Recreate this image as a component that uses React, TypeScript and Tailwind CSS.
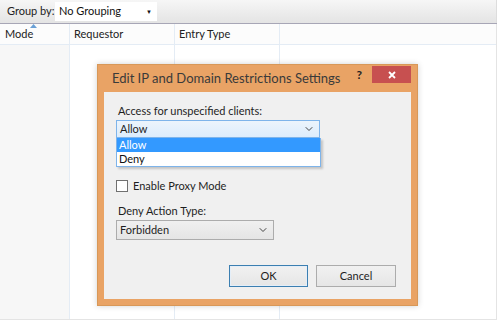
import { ChevronDown } from 'lucide-react'

const font = { fontFamily: 'Lato, "Noto Sans", sans-serif' }

function Select({ value, focused, width, height }: { value: string; focused?: boolean; width: string; height: string }) {
  return (
    <div
      className={`${width} ${height} flex items-center justify-between pl-[3px] pr-[4px] border text-[11px] text-[#1e1e1e] ${
        focused
          ? 'border-[#7eb4ea] bg-gradient-to-b from-[#ecf4fc] to-[#dcecfc]'
          : 'border-[#acacac] bg-gradient-to-b from-[#f0f0f0] to-[#e5e5e5]'
      }`}
    >
      <span>{value}</span>
      <ChevronDown size={12} strokeWidth={2} className="text-[#444]" />
    </div>
  )
}

export default function App() {
  return (
    <div className="relative w-[500px] h-[328px] bg-white overflow-hidden" style={font}>
      {/* Toolbar */}
      <div className="h-[23px] flex items-center gap-[2px] pl-[7px] bg-gradient-to-b from-[#f6f6f6] to-[#e4e4e4] border-r border-[#ddd] w-[497px]">
        <span className="w-[46px] shrink-0 whitespace-nowrap text-[11px] text-[#222]">Group by:</span>
        <div className="w-[102px] shrink-0 h-[19px] bg-white flex items-center justify-between pl-[4px] pr-[5px] text-[11px] text-[#111]">
          <span>No Grouping</span>
          <span className="text-[6px]">▼</span>
        </div>
      </div>
      <div className="h-[1px] w-[497px] bg-[#a7a6b6]" />

      {/* List */}
      <div className="relative w-[497px] h-[296px] border-r border-b border-[#e4e4e4] flex">
        <div className="w-[70px] bg-[#f7f7f7] border-r border-[#e4ecf5] flex flex-col">
          <div className="h-[21px] border-b border-[#e4ecf5] flex items-center pl-[5px] text-[11px] text-[#222] relative bg-[#fcfcfc]">
            Mode
            <svg className="absolute left-[30px] top-[0px]" width="7" height="4" viewBox="0 0 7 4">
              <path d="M0 4 L3.5 0 L7 4 Z" fill="#6aa0d6" />
            </svg>
          </div>
        </div>
        <div className="w-[105px] border-r border-[#e4ecf5] flex flex-col">
          <div className="h-[21px] border-b border-[#e4ecf5] flex items-center pl-[4px] text-[11px] text-[#222] bg-[#fcfcfc]">
            Requestor
          </div>
        </div>
        <div className="w-[105px] border-r border-[#e4ecf5] flex flex-col">
          <div className="h-[21px] border-b border-[#e4ecf5] flex items-center pl-[4px] text-[11px] text-[#222] bg-[#fcfcfc]">
            Entry Type
          </div>
        </div>
        <div className="flex-1 flex flex-col">
          <div className="h-[21px] border-b border-[#e4ecf5] bg-[#fcfcfc]" />
        </div>
      </div>

      {/* Dialog */}
      <div className="absolute left-[97px] top-[64px] w-[321px] h-[242px] bg-[#e9a365] border border-[#d89858] shadow-[0_0_6px_rgba(0,0,0,0.18)] flex flex-col">
        <div className="h-[27px] flex items-start pl-[14px]">
          <span className="text-[13px] leading-[18px] text-[#3a3a3a] mt-[4px] flex-1 whitespace-nowrap">Edit IP and Domain Restrictions Settings</span>
          <span className="text-[12px] leading-[14px] font-bold text-[#222] mt-[3px] mr-[10px]">?</span>
          <div className="w-[39px] h-[17px] bg-[#c75050] flex items-center justify-center mr-[6px] mt-[1px] shrink-0">
            <svg width="8" height="8" viewBox="0 0 8 8">
              <path d="M1 1 L7 7 M7 1 L1 7" stroke="#fff" strokeWidth="1.8" />
            </svg>
          </div>
        </div>
        <div className="mx-[6px] mb-[6px] flex-1 bg-[#f0f0f0] flex flex-col pl-[12px] pt-[12px]">
          <span className="text-[11px] leading-[14px] text-[#1e1e1e] pl-[2px]">Access for unspecified clients:</span>
          <div className="relative mt-[2px]">
            <Select value="Allow" focused width="w-[204px]" height="h-[18px]" />
            <div className="absolute left-0 top-[18px] w-[205px] bg-white border border-[#7eb4ea] border-t-0 shadow-[2px_2px_2px_rgba(0,0,0,0.18)] text-[11px]">
              <div className="h-[14px] bg-[#3399ff] text-white pl-[2px] flex items-center">Allow</div>
              <div className="h-[14px] text-[#111] pl-[2px] flex items-center">Deny</div>
            </div>
          </div>
          <div className="mt-[41px] h-[14px] flex items-center gap-[5px]">
            <div className="w-[12px] h-[12px] bg-white border border-[#707070]" />
            <span className="text-[11px] text-[#1e1e1e]">Enable Proxy Mode</span>
          </div>
          <span className="mt-[11px] text-[11px] leading-[14px] text-[#1e1e1e] pl-[2px]">Deny Action Type:</span>
          <div className="mt-[2px]">
            <Select value="Forbidden" width="w-[158px]" height="h-[20px]" />
          </div>
          <div className="mt-[25px] flex gap-[8px] pl-[113px]">
            <button className="w-[79px] h-[22px] border border-[#3c7fb1] bg-gradient-to-b from-[#f1f1f1] to-[#e6e6e6] text-[11px] text-[#1e1e1e] shadow-[inset_0_0_0_1px_#e4eef8]">
              OK
            </button>
            <button className="w-[80px] h-[22px] border border-[#acacac] bg-gradient-to-b from-[#f1f1f1] to-[#e6e6e6] text-[11px] text-[#1e1e1e]">
              Cancel
            </button>
          </div>
        </div>
      </div>
    </div>
  )
}
